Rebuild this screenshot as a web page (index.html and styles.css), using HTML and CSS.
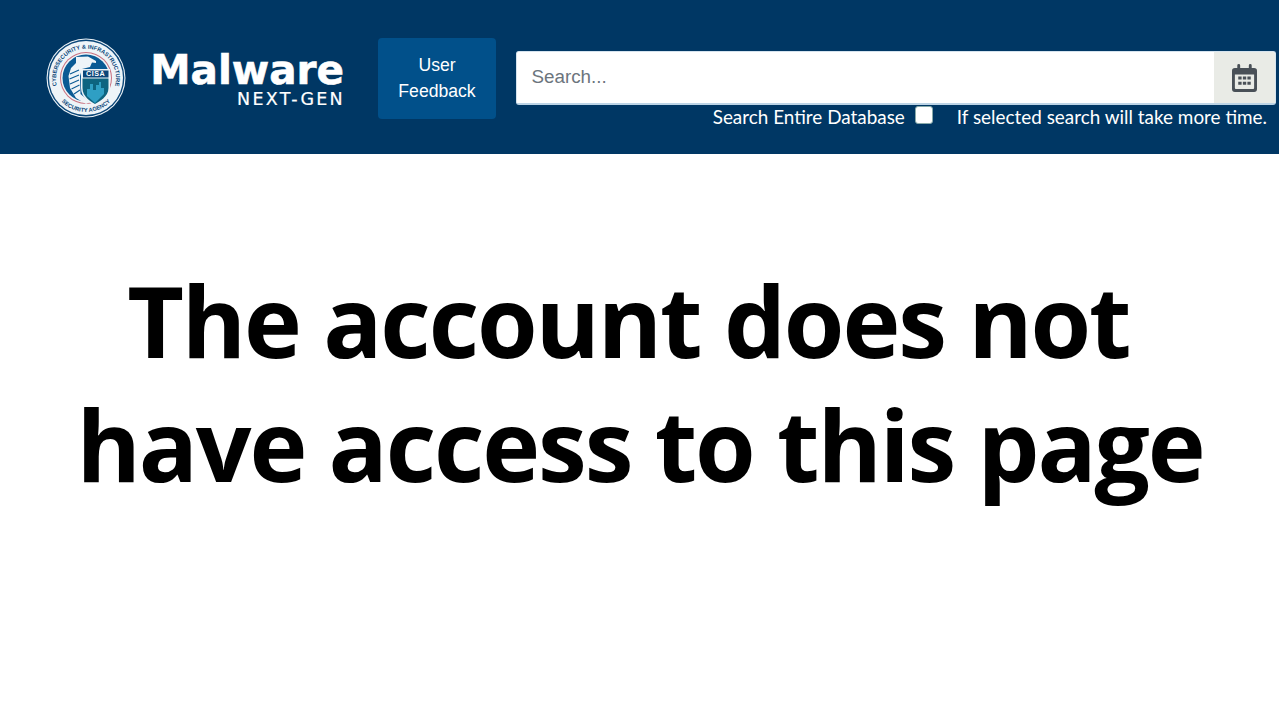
FILE: index.html
```html
<!DOCTYPE html>
<html lang="en">
<head>
<meta charset="utf-8">
<title>Malware Next-Gen</title>
<link rel="stylesheet" href="styles.css">
</head>
<body>
<header class="topbar">
  <div class="brand">
    <svg class="seal" viewBox="0 0 80 80" width="80" height="80" aria-label="CISA seal">
      <defs>
        <path id="arcTop" d="M11.500 50 A30 30 0 1 1 68.500 50"/>
        <path id="arcBottom" d="M7.500 50 A34 34 0 0 0 72.500 50"/>
      </defs>
      <circle cx="40" cy="40" r="39.500" fill="#eef4f8"/>
      <circle cx="40" cy="40" r="38.400" fill="#0a4678"/>
      <circle cx="40" cy="40" r="37" fill="#eef4f8"/>
      <text class="seal-text"><textPath href="#arcTop" startOffset="50%" text-anchor="middle">CYBERSECURITY &amp; INFRASTRUCTURE</textPath></text>
      <text class="seal-text"><textPath href="#arcBottom" startOffset="50%" text-anchor="middle">SECURITY AGENCY</textPath></text>
      <circle cx="40" cy="40" r="26" fill="#c9707f"/>
      <circle cx="40" cy="40" r="25" fill="#eef4f8"/>
      <circle cx="40" cy="40" r="23.500" fill="#0a5a94"/>
      <path d="M30 19 L42 18.500 L50 23 L50 25 L46 24.500 L44 29 L36 31 L34 38 L34.500 56 L44 64 L40 66 L30 60 L24 50 L22.500 38 L25 30 L30 25 Z" fill="#eef4f8"/>
      <path d="M24 36 L33 32 M23.500 41 L33 37 M24 46 L33 42 M25.500 51 L33.500 47 M28 56 L34 52" stroke="#0a5a94" stroke-width="1.100"/>
      <path d="M35 31 H64 V50 C64 60 54 65 49 68 C44 65 35 60 35 50 Z" fill="#eef4f8"/>
      <path d="M36.500 40.500 H62.500 V50 C62.500 59 53 63.500 49 66 C45 63.500 36.500 59 36.500 50 Z" fill="#0d6480"/>
      <path d="M37 32.500 H62.500 V39.500 H37 Z" fill="#0a4678"/>
      <path d="M41 58 V51 H44 V46 H47 V52 H50 V47 H53 V44 H55 V50 H58 V56 L49 65 Z" fill="#2f9fc4"/>
      <text class="seal-cisa" x="49.700" y="38.400" text-anchor="middle">CISA</text>
    </svg>
    <div class="wordmark">
      <span class="wordmark-main">Malware</span>
      <span class="wordmark-sub">NEXT-GEN</span>
    </div>
  </div>
  <button class="feedback" type="button">User<br>Feedback</button>
  <div class="search-area">
    <div class="search-box">
      <input class="search-input" type="text" placeholder="Search...">
      <span class="calendar">
        <svg viewBox="0 0 26 30" width="25" height="29" aria-hidden="true">
          <path d="M7 1 a1.500 1.500 0 0 1 1.500 1.500 V5 h9 V2.500 a1.500 1.500 0 0 1 3 0 V5 H23 a3 3 0 0 1 3 3 V27 a3 3 0 0 1 -3 3 H3 a3 3 0 0 1 -3 -3 V8 a3 3 0 0 1 3 -3 H5.500 V2.500 A1.500 1.500 0 0 1 7 1 Z M3 12 V26 a1 1 0 0 0 1 1 H22 a1 1 0 0 0 1 -1 V12 Z" fill="#495057" fill-rule="evenodd"/>
          <path d="M6.500 14 h3.500 v3 h-3.500 z M11.300 14 h3.500 v3 h-3.500 z M16 14 h3.500 v3 h-3.500 z M6.500 19.500 h3.500 v3 h-3.500 z M11.300 19.500 h3.500 v3 h-3.500 z M16 19.500 h3.500 v3 h-3.500 z" fill="#495057"/>
        </svg>
      </span>
    </div>
    <div class="search-options">
      <label class="entire">Search Entire Database <input class="entire-check" type="checkbox"></label>
      <span class="hint">If selected search will take more time.</span>
    </div>
  </div>
</header>
<main class="message">
  <h1 class="message-title">The account does not&nbsp;<br>have access to this page</h1>
</main>
</body>
</html>
```
FILE: styles.css
```css
* { box-sizing: border-box; }
html, body { margin: 0; background: #fff; }
body { width: 1280px; height: 720px; overflow: hidden; font-family: "Liberation Sans", Arial, sans-serif; }

.topbar {
  display: flex;
  height: 154px;
  width: 1279px;
  background: #003764;
  color: #fff;
  padding: 38px 3px 0 46px;
}
.brand { display: flex; align-items: flex-start; width: 332px; flex: none; }
.seal { flex: none; }
.seal-text { font: 700 5.700px "Liberation Sans", sans-serif; fill: #0a4678; }
.seal-cisa { font: 700 7.200px "Liberation Sans", sans-serif; fill: #fff; letter-spacing: .5px; }

.wordmark { display: flex; flex-direction: column; align-items: flex-end; margin: 10px 0 0 25px; width: 193px; }
.wordmark-main { font: 700 40.500px/44px "DejaVu Sans", sans-serif; -webkit-text-stroke: .6px #fff; }
.wordmark-sub { font: 400 17.500px/18px "DejaVu Sans", sans-serif; letter-spacing: 2.300px; margin: -2px -1px 0 0; -webkit-text-stroke: .2px #fff; }

.feedback {
  flex: none;
  width: 118px;
  height: 81px;
  border: 0;
  border-radius: 4px;
  background: #01508a;
  color: #fff;
  font: 400 17.600px/26px "Liberation Sans", sans-serif;
  padding: 0 0 2px;
}

.search-area { flex: none; width: 760px; margin: 13px 0 0 20px; }
.search-box { display: flex; height: 54px; border-radius: 3px; overflow: hidden; background: #fff; border: 1px solid #d5e3ee; border-bottom: 2px solid #bcd4e6; }
.search-input {
  flex: 1;
  min-width: 0;
  border: 0;
  outline: 0;
  padding: 0 14.500px 1px;
  font: 400 18.800px "Liberation Sans", sans-serif;
  color: #495057;
  background: #fff;
}
.search-input::placeholder { color: #6c757d; opacity: 1; }
.calendar { flex: none; width: 61px; background: #e9ebe6; display: flex; align-items: center; justify-content: center; }

.search-options {
  display: flex;
  justify-content: flex-end;
  align-items: center;
  gap: 24px;
  padding-right: 9px;
  font: 400 18.900px/24px Lato, sans-serif;
  height: 24px;
}
.entire { display: flex; align-items: center; gap: 10px; }
.entire-check { width: 18px; height: 18px; margin: 0 0 4px; appearance: none; background: #fff; border-radius: 3px; border: 1px solid #8aa; }

.message { text-align: center; padding-top: 104px; }
.message-title {
  margin: 0;
  font: 700 98px/124px "Open Sans", "Noto Sans", sans-serif;
  letter-spacing: -2.100px;
  color: #000;
}
```
